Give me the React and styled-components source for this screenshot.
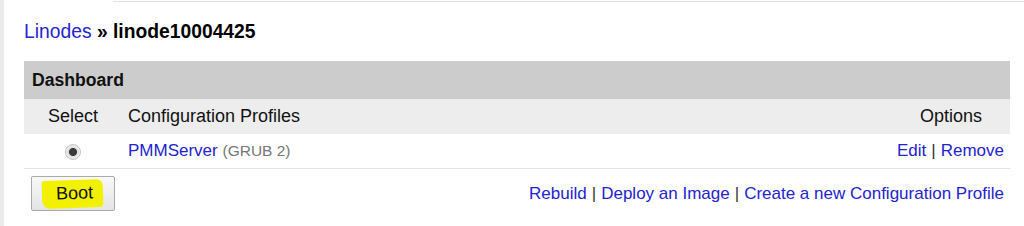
import React from "react";
import styled, { createGlobalStyle } from "styled-components";

const GlobalStyle = createGlobalStyle`
  html, body {
    margin: 0;
    padding: 0;
    background: #ffffff;
    font-family: "Liberation Sans", Arial, sans-serif;
  }
`;

function App() {
  return (
    <>
      <GlobalStyle />
      <Page>
        <SideStrip />
        <Main>
          <TopBar />
          <Breadcrumb>
            <Link href="#">Linodes</Link>
            <Current> » linode10004425</Current>
          </Breadcrumb>
          <Panel>
            <PanelTitle>Dashboard</PanelTitle>
            <HeadRow>
              <SelectCell>Select</SelectCell>
              <NameCell>Configuration Profiles</NameCell>
              <OptionsCell $head>Options</OptionsCell>
            </HeadRow>
            <BodyRow>
              <SelectCell>
                <Radio />
              </SelectCell>
              <NameCell>
                <Link href="#">PMMServer</Link> <Muted>(GRUB 2)</Muted>
              </NameCell>
              <OptionsCell>
                <Link href="#">Edit</Link>
                <Sep>|</Sep>
                <Link href="#">Remove</Link>
              </OptionsCell>
            </BodyRow>
            <Footer>
              <BootButton>
                <Highlight>Boot</Highlight>
              </BootButton>
              <Actions>
                <Link href="#">Rebuild</Link>
                <Sep>|</Sep>
                <Link href="#">Deploy an Image</Link>
                <Sep>|</Sep>
                <Link href="#">Create a new Configuration Profile</Link>
              </Actions>
            </Footer>
          </Panel>
        </Main>
      </Page>
    </>
  );
}

export default App;

const Page = styled.div`
  display: flex;
  width: 1024px;
  height: 226px;
  overflow: hidden;
`;

const SideStrip = styled.div`
  width: 4px;
  background: #ececec;
  flex-shrink: 0;
`;

const Main = styled.div`
  flex: 1;
  display: flex;
  flex-direction: column;
  padding: 0 14px 0 20px;
`;

const TopBar = styled.div`
  margin-left: 89px;
  margin-right: -14px;
  height: 1px;
  border-bottom: 1px solid #e2e2e2;
`;

const Breadcrumb = styled.div`
  margin-top: 18px;
  font-size: 19.3px;
  line-height: 24px;
  color: #000;
`;

const Link = styled.a`
  color: #2323cf;
  text-decoration: none;
`;

const Current = styled.span`
  font-weight: bold;
`;

const Panel = styled.div`
  margin-top: 17px;
  display: flex;
  flex-direction: column;
  font-size: 17px;
  color: #111;
`;

const PanelTitle = styled.div`
  height: 38px;
  background: #cccccc;
  padding-left: 8px;
  display: flex;
  align-items: center;
  font-weight: bold;
  font-size: 17.6px;
  padding-top: 1px;
  box-sizing: border-box;
`;

const Row = styled.div`
  display: flex;
  align-items: center;
`;

const HeadRow = styled(Row)`
  height: 35px;
  background: #ededed;
  font-size: 18px;
`;

const BodyRow = styled(Row)`
  height: 34px;
  border-bottom: 1px solid #e3e3e3;
`;

const SelectCell = styled.div`
  width: 98px;
  display: flex;
  justify-content: center;
`;

const NameCell = styled.div`
  flex: 1;
  padding-left: 6px;
`;

const OptionsCell = styled.div`
  padding-right: ${(p) => (p.$head ? "28px" : "6px")};
  display: flex;
  align-items: center;
`;

const Muted = styled.span`
  color: #777;
  font-size: 15.5px;
`;

const Sep = styled.span`
  color: #333;
  margin: 0 5px;
`;

const Radio = styled.span`
  width: 14px;
  height: 14px;
  border-radius: 50%;
  border: 1px solid #c4c4c4;
  background: radial-gradient(circle, #3a3a3a 0 3.6px, #dcdcdc 4.4px, #f0f0f0 7px);
  margin-top: 2px;
`;

const Footer = styled(Row)`
  padding: 7px 6px 0 7px;
  justify-content: space-between;
`;

const BootButton = styled.button`
  width: 84px;
  height: 35px;
  border: 1px solid #aaaaaa;
  border-radius: 2px;
  background: linear-gradient(#f8f8f8, #e4e4e4);
  font-family: inherit;
  font-size: 18px;
  color: #111;
  display: flex;
  align-items: center;
  justify-content: center;
  padding: 0;
`;

const Highlight = styled.span`
  background: #f2f200;
  padding: 3px 10px 4px 14px;
  border-radius: 3px 6px 4px 8px;
  transform: rotate(-2deg);
`;

const Actions = styled.div`
  display: flex;
  align-items: center;
`;
